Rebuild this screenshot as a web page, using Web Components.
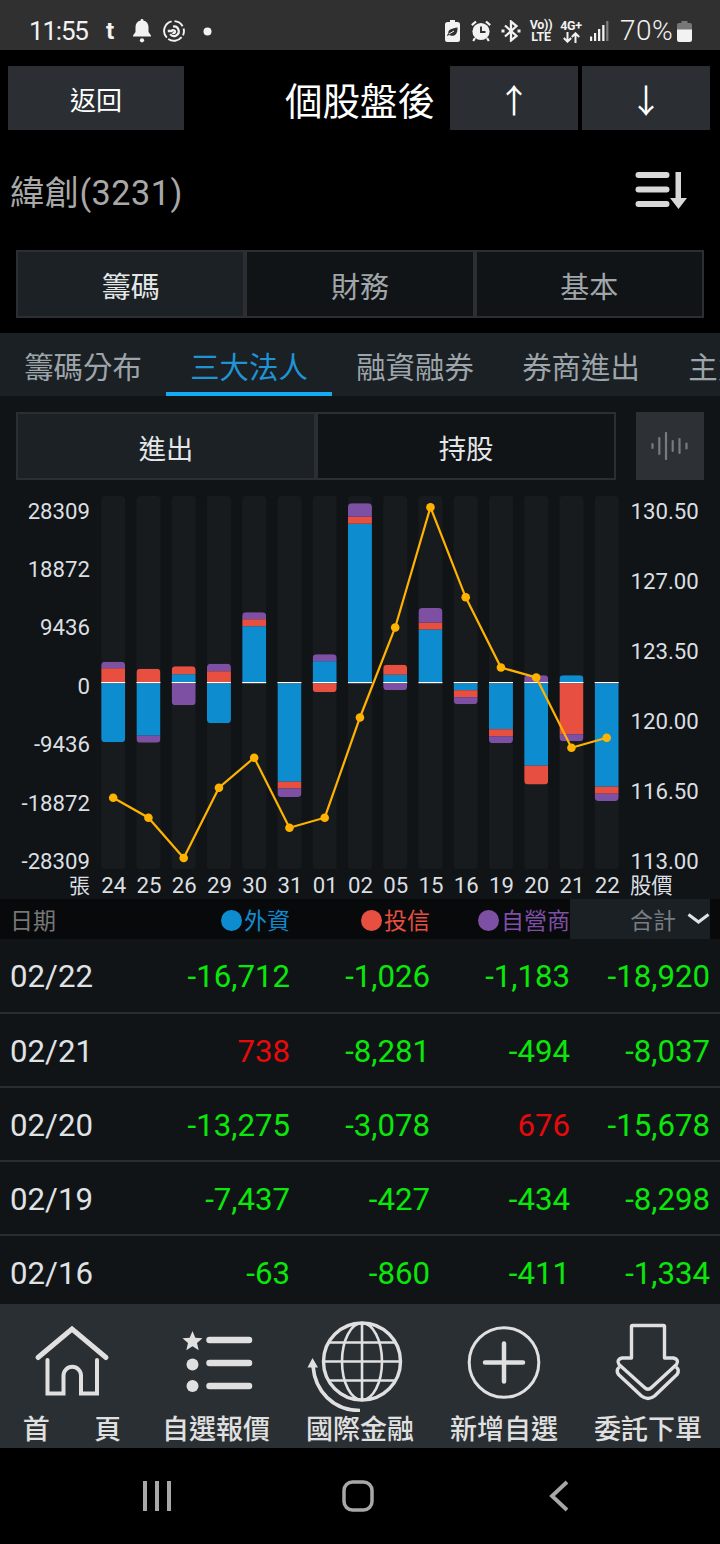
<!DOCTYPE html>
<html lang="zh-Hant">
<head>
<meta charset="utf-8">
<meta name="viewport" content="width=device-width, initial-scale=1">
<title>個股盤後</title>
<style>
    html, body{
        margin:0;
        background:#000;
    }
    body{
        width:720px;
        height:1544px;
        overflow:hidden;
        font-family:Roboto,"Noto Sans CJK TC",sans-serif;
        color:#fff;
        display:flex;
        flex-direction:column;
    }
    main{
        height:908px;
        overflow:hidden;
        background:#101417;
        flex:none;
    }
    .herramientas{
        display:flex;
        gap:20px;
        padding:16px 16px 16px;
    }
    .herramientas seg-group{ flex:1 }
</style>
</head>
<body>

<status-bar></status-bar>
<app-header titulo="個股盤後">
    <tool-button slot="izq" style="width:176px">返回</tool-button>
    <tool-button slot="der" style="width:128px;--size:33px;--baja:8px">↑</tool-button>
    <tool-button slot="der" style="width:128px;--size:33px;--baja:8px">↓</tool-button>
</app-header>
<stock-title>緯創(3231)</stock-title>
<seg-group style="margin:0 16px;--apagado:#a0a6a9;--size:29px">
    <seg-item activo>籌碼</seg-item>
    <seg-item>財務</seg-item>
    <seg-item>基本</seg-item>
</seg-group>
<tab-bar>
    <tab-item>籌碼分布</tab-item>
    <tab-item activo>三大法人</tab-item>
    <tab-item>融資融券</tab-item>
    <tab-item>券商進出</tab-item>
    <tab-item>主力進出</tab-item>
</tab-bar>
<main>
    <div class="herramientas">
        <seg-group style="--apagado:#e4e7e8;--size:27.300px">
            <seg-item activo>進出</seg-item>
            <seg-item>持股</seg-item>
        </seg-group>
        <wave-button></wave-button>
    </div>
    <inst-chart></inst-chart>
    <inst-table></inst-table>
</main>
<bottom-nav>
    <nav-item icono="casa" ancho>首 頁</nav-item>
    <nav-item icono="lista">自選報價</nav-item>
    <nav-item icono="globo">國際金融</nav-item>
    <nav-item icono="mas">新增自選</nav-item>
    <nav-item icono="orden">委託下單</nav-item>
</bottom-nav>
<system-nav></system-nav>

<script>
// Base: cada elemento solo define su html()
class Base extends HTMLElement{
    constructor(){
        super()
        this.attachShadow({mode:'open'})
    }
    connectedCallback(){
        this.shadowRoot.innerHTML = this.html()
    }
}

class StatusBar extends Base{
    html(){
        return `
        <style>
            :host{
                display:flex;
                align-items:center;
                justify-content:space-between;
                flex:none;
                height:50px;
                padding:12px 28px 0 29px;
                box-sizing:border-box;
                background:#303030;
                color:#f2f2f2;
                font-size:26px;
                line-height:38px;
            }
            div{ display:flex; align-items:center; height:38px }
            svg{ display:block; flex:none }
            .hora{ width:60px; letter-spacing:-1.2px; white-space:nowrap }
            .t{ width:10px; margin:0 19px 0 17px; font:bold 23px/34px Inter,sans-serif }
            .red{
                display:flex;
                flex-direction:column;
                align-items:center;
                font:bold 12.5px/12px Roboto,sans-serif;
                letter-spacing:-.3px;
                white-space:nowrap;
            }
            .pct{ letter-spacing:.5px; font-size:28px; width:54px; margin-left:11px; font-weight:300; white-space:nowrap }
        </style>
        <div>
            <span class="hora">11:55</span>
            <span class="t">t</span>
            <svg style="margin-left:-2px" width="18" height="24" viewBox="0 0 18 24" fill="currentColor"><path d="M9 0c1 0 1.400.6 1.400 1.400C13.600 2.100 15.500 4.700 15.500 8v5L18 16.500v1H0v-1L2.500 13V8c0-3.300 1.900-5.900 5.100-6.600C7.600.6 8 0 9 0z"/><circle cx="9" cy="21.300" r="2.100"/></svg>
            <svg style="margin-left:12px" width="22" height="22" viewBox="0 0 23 23" fill="none" stroke="currentColor" stroke-width="2"><path d="M9 1.400A10.300 10.300 0 0 0 4 18.500M5.500 19.800A10.300 10.300 0 0 0 19.500 18M21 16A10.300 10.300 0 0 0 21.500 9M20.500 6.500A10.300 10.300 0 0 0 12 1.200"/><path stroke-width="2.400" d="M5 11.500h4c1-1.500 4-.8 3.500 1.200-.3 1-1.500 1.300-2.500.5M10.500 6.800a5 5 0 1 1-3 8"/></svg>
            <svg style="margin-left:18px" width="9" height="9"><circle cx="4.500" cy="4.500" r="4" fill="currentColor"/></svg>
        </div>
        <div>
            <svg width="15" height="22" viewBox="0 0 15 22"><path fill="currentColor" d="M5 0h5v2h2.500A2.500 2.500 0 0 1 15 4.500v15a2.500 2.500 0 0 1-2.500 2.500h-10A2.500 2.500 0 0 1 0 19.500v-15A2.500 2.500 0 0 1 2.500 2H5z"/><path fill="#303030" d="M12.500 7.500c.3 5-1.500 8.500-5.500 8.300-1.200 0-2-.4-2.800-1L2.500 16l-.6-1 1.500-1.300C2.500 9 7.500 8.500 12.500 7.500z"/><path d="M4 14l5-3" stroke="currentColor"/></svg>
            <svg style="margin-left:11px" width="20" height="22" viewBox="0 0 20 22"><circle cx="10" cy="11.500" r="8.600" fill="currentColor"/><path d="M10 6.500v5.500h4.500" fill="none" stroke="#303030" stroke-width="1.900"/><path d="M.8 5.200L5 1.500M19.200 5.200L15 1.500M4 18l-1.800 3M16 18l1.800 3" stroke="currentColor" stroke-width="2.200" fill="none"/></svg>
            <svg style="margin-left:10px" width="20" height="22" viewBox="0 0 20 22" fill="none" stroke="currentColor" stroke-width="2.300"><path d="M4 5.500L15.500 16 10 20.500v-19L15.500 6 4 16.500"/><path d="M.5 11h3M16.500 11h3" stroke-width="3"/></svg>
            <span class="red" style="margin-left:9px;width:22px"><span>Vo))</span><span>LTE</span></span>
            <span class="red" style="margin-left:8px;width:22px"><span>4G+</span>
                <svg width="17" height="11" viewBox="0 0 17 11" fill="none" stroke="currentColor" stroke-width="2"><path d="M4.500 0v9.500M.8 6l3.700 3.700L8.200 6M12.500 11V1.500M8.800 5l3.700-3.700L16.200 5"/></svg>
            </span>
            <svg style="margin-left:8px" width="19" height="20" viewBox="0 0 19 20" fill="currentColor"><path d="M0 15.500h2.200V20H0zM4 12h2.200v8H4zM8 8h2.300v12H8zM12.200 4h2.300v16h-2.300z"/><path d="M16.200 0h2.200v20h-2.200z" opacity=".4"/></svg>
            <span class="pct">70%</span>
            <svg style="margin-left:3px" width="15" height="21" viewBox="0 0 15 21"><path fill="#777" d="M4.500 0h6v2H13a2 2 0 0 1 2 2v6H0V4a2 2 0 0 1 2-2h2.500z"/><path fill="currentColor" d="M0 8.500h15v10a2.500 2.500 0 0 1-2.500 2.500h-10A2.500 2.500 0 0 1 0 18.500z"/></svg>
        </div>`
    }
}
customElements.define("status-bar",StatusBar)


class ToolButton extends Base{
    html(){
        return `
        <style>
            :host{
                display:flex;
                align-items:center;
                justify-content:center;
                height:64px;
                padding-top:var(--baja,5px);
                box-sizing:border-box;
                background:#2b2f33;
                color:#fff;
                font-size:var(--size,26px);
                line-height:56px;
            }
        </style>
        <slot></slot>`
    }
}
customElements.define("tool-button",ToolButton)


class AppHeader extends Base{
    html(){
        return `
        <style>
            :host{
                display:flex;
                flex:none;
                height:96px;
                padding:16px 10px 16px 8px;
                box-sizing:border-box;
            }
            h1{
                flex:1;
                margin:0;
                padding:6px 15px 0 0;
                text-align:right;
                font-size:37.5px;
                font-weight:400;
                line-height:60px;
            }
            div{ display:flex; gap:4px }
        </style>
        <slot name="izq"></slot>
        <h1>${this.getAttribute("titulo")}</h1>
        <div><slot name="der"></slot></div>`
    }
}
customElements.define("app-header",AppHeader)


class StockTitle extends Base{
    html(){
        return `
        <style>
            :host{
                display:flex;
                flex:none;
                justify-content:space-between;
                align-items:center;
                height:104px;
                padding:0 33px 10px 10px;
                box-sizing:border-box;
                font-size:34.200px;
                letter-spacing:.5px;
                line-height:50px;
                color:#a8a8a8;
            }
            svg{ margin-top:-6px }
        </style>
        <slot></slot>
        <svg width="52" height="38" viewBox="0 0 52 38"><path d="M3.500 4h28M3.500 18.500h28M3.500 33h28" stroke="#d8d8d8" stroke-width="6" stroke-linecap="round"/><path d="M40.500 1h5.500v26h6L43.500 38 35 27h5.500z" fill="#d8d8d8"/></svg>`
    }
}
customElements.define("stock-title",StockTitle)


class SegGroup extends Base{
    html(){
        return `
        <style>
            :host{ display:flex; height:68px; flex:none }
        </style>
        <slot></slot>`
    }
}
customElements.define("seg-group",SegGroup)


class SegItem extends Base{
    html(){
        return `
        <style>
            :host{
                flex:1;
                display:block;
                box-sizing:border-box;
                border:2px solid #2b2e32;
                background:#101417;
                color:var(--apagado);
                padding-top:4px;
                text-align:center;
                font-size:var(--size);
                line-height:64px;
                height:68px;
            }
            :host([activo]){ background:#1b2124; color:#e4e7e8 }
        </style>
        <slot></slot>`
    }
}
customElements.define("seg-item",SegItem)


class TabBar extends Base{
    html(){
        return `
        <style>
            :host{
                display:flex;
                flex:none;
                height:63px;
                margin-top:15px;
                overflow:hidden;
                background:#1a2024;
            }
        </style>
        <slot></slot>`
    }
}
customElements.define("tab-bar",TabBar)


class TabItem extends Base{
    html(){
        return `
        <style>
            :host{
                flex:none;
                display:block;
                width:166px;
                height:63px;
                box-sizing:border-box;
                border-bottom:4px solid transparent;
                text-align:center;
                white-space:nowrap;
                font-size:29.4px;
                line-height:70px;
                color:#9da4aa;
            }
            :host([activo]){ color:#1f93d4; border-color:#13abf5 }
        </style>
        <slot></slot>`
    }
}
customElements.define("tab-item",TabItem)


class WaveButton extends Base{
    html(){
        return `
        <style>
            :host{
                display:flex;
                align-items:center;
                justify-content:center;
                width:68px;
                height:68px;
                background:#2d3135;
            }
        </style>
        <svg width="38" height="28" viewBox="0 0 38 28" stroke="#777b7e" stroke-width="2.200" stroke-linecap="round"><path d="M1.500 12v4M8.300 6v16M15 1v26M21.700 9v10M28.500 7v14M35.500 11.500v5"/></svg>`
    }
}
customElements.define("wave-button",WaveButton)


// v = azul, r = rojo, m = morado. Alturas en px desde la línea del cero
const dias = [
    {d:"24", up:[["r",14],["m",6.5]],             down:[["v",59]],                     p:797.7},
    {d:"25", up:[["r",13.5]],                     down:[["v",52.5],["m",7]],           p:817.7},
    {d:"26", up:[["v",8],["r",8]],                down:[["m",22]],                     p:858},
    {d:"29", up:[["r",11],["m",7.5]],             down:[["v",40]],                     p:787.7},
    {d:"30", up:[["v",56],["r",7],["m",7]],       down:[],                             p:757.7},
    {d:"31", up:[],                               down:[["v",98.5],["r",6.8],["m",8.5]], p:827.7},
    {d:"01", up:[["v",21],["m",7]],               down:[["r",9]],                      p:817.7},
    {d:"02", up:[["v",158.5],["r",7],["m",13.5]], down:[],                             p:717.5},
    {d:"05", up:[["v",7.5],["r",10]],             down:[["m",7]],                      p:627.5},
    {d:"15", up:[["v",52.7],["r",7],["m",14.5]],  down:[],                             p:507.2},
    {d:"16", up:[],                               down:[["v",7],["r",7],["m",7]],      p:597.3},
    {d:"19", up:[],                               down:[["v",46],["r",7],["m",7]],     p:667.5},
    {d:"20", up:[["m",7]],                        down:[["v",82.5],["r",18.8]],        p:677.5},
    {d:"21", up:[["v",7]],                        down:[["r",51],["m",7]],             p:747.7},
    {d:"22", up:[],                               down:[["v",103.5],["r",7],["m",7.3]], p:737.7}
]
const tono = {v:"#0d8dd0", r:"#e74f41", m:"#7d50a4"}

class InstChart extends Base{
    html(){
        // los positivos arrancan en cero y los negativos en base
        const cero = 186.2, base = 187.2, ancho = 24
        const cx = i => 113.2+i*35.25
        let pistas = "", barras = "", fechas = "", clips = ""

        dias.forEach((dia,i)=>{
            let x = cx(i)-ancho/2
            pistas += `<rect x="${x}" y="0" width="${ancho}" height="373" rx="3.500"/>`
            let alto = dia.up.reduce((a,b)=>a+b[1],0)
            let bajo = dia.down.reduce((a,b)=>a+b[1],0)
            // el recorte redondea solo el extremo de cada pila
            let a = alto ? `M${x} ${cero}V${cero-alto+4}q0-4 4-4h16q4 0 4 4V${cero}z` : ""
            let b = bajo ? `M${x} ${base}V${base+bajo-4}q0 4 4 4h16q4 0 4-4V${base}z` : ""
            clips += `<clipPath id="c${i}"><path d="${a}${b}"/></clipPath>`
            let y = cero, rects = ""
            dia.up.forEach(([c,h])=>{
                y -= h
                rects += `<rect x="${x}" y="${y}" width="${ancho}" height="${h}" fill="${tono[c]}"/>`
            })
            y = base
            dia.down.forEach(([c,h])=>{
                rects += `<rect x="${x}" y="${y}" width="${ancho}" height="${h}" fill="${tono[c]}"/>`
                y += h
            })
            barras += `<g clip-path="url(#c${i})">${rects}</g><rect x="${x}" y="186" width="${ancho}" height="1.200" fill="#fff"/>`
            fechas += `<text x="${cx(i)+.5}" y="397" text-anchor="middle">${dia.d}</text>`
        })

        let izq = ["28309","18872","9436","0","-9436","-18872","-28309"]
            .map((t,i)=>`<text x="90" y="${22.5+i*58.4}" text-anchor="end">${t}</text>`).join("")
        let der = ["130.50","127.00","123.50","120.00","116.50","113.00"]
            .map((t,i)=>`<text x="630.500" y="${22.5+i*70.1}">${t}</text>`).join("")
        let puntos = dias.map((dia,i)=>[cx(i),dia.p-496])

        return `
        <style>
            :host{ display:block; height:403px }
            svg{ display:block }
            text{ font-size:22.2px; fill:#dcdfe1 }
        </style>
        <svg width="720" height="403" viewBox="0 0 720 403">
            <defs>${clips}</defs>
            <g fill="#171b1d">${pistas}</g>
            ${barras}
            <polyline points="${puntos.join(" ")}" fill="none" stroke="#ffb300" stroke-width="2.200"/>
            <g fill="#ffb300">${puntos.map(p=>`<circle cx="${p[0]}" cy="${p[1]}" r="4.300"/>`).join("")}</g>
            ${izq}${der}${fechas}
            <text x="90" y="397" text-anchor="end" style="font-size:21px">張</text>
            <text x="630" y="397" style="font-size:21.300px">股價</text>
        </svg>`
    }
}
customElements.define("inst-chart",InstChart)


const filas = [
    ["02/22","-16,712","-1,026","-1,183","-18,920"],
    ["02/21","738","-8,281","-494","-8,037"],
    ["02/20","-13,275","-3,078","676","-15,678"],
    ["02/19","-7,437","-427","-434","-8,298"],
    ["02/16","-63","-860","-411","-1,334"]
]

class InstTable extends Base{
    html(){
        let cuerpo = filas.map(f=>`
            <div class="fila">${f.map((t,i)=>{
                let clase = i==0 ? "" : t[0]=="-" ? "baja" : "sube"
                return `<span class="${clase}">${t}</span>`
            }).join("")}</div>`).join("")
        return `
        <style>
            :host{ display:block }
            .cab, .fila{
                display:grid;
                grid-template-columns:140px 140px 140px 140px 140px;
                padding:0 10px;
                text-align:right;
                white-space:nowrap;
            }
            .cab{
                height:40px;
                background:#08090b;
                font-size:23px;
                line-height:46px;
            }
            .cab span{ display:flex; justify-content:flex-end; height:40px }
            .cab i{
                width:21px;
                height:21px;
                margin:11px 2px 0 0;
                border-radius:50%;
                background:currentColor;
            }
            .cab .fecha{ justify-content:flex-start; color:#777 }
            .cab .total{ background:#1a2024; color:#777d81 }
            .cab svg{ margin:13px 0 0 11px }
            .fila{
                height:74px;
                box-sizing:border-box;
                border-bottom:2px solid #2a2d30;
                font-size:31.200px;
                line-height:76px;
                color:#e0e3e5;
            }
            .fila:nth-of-type(2){ height:75px }
            .fila span:first-child{ text-align:left }
            .baja{ color:#0be70b }
            .sube{ color:#e60a0a }
        </style>
        <div class="cab">
            <span class="fecha">日期</span>
            <span style="color:#0d8dd0"><i></i>外資</span>
            <span style="color:#e74f41"><i></i>投信</span>
            <span style="color:#7d50a4"><i></i>自營商</span>
            <span class="total">合計<svg width="23" height="14" viewBox="0 0 23 14"><path d="M1.500 2.500l10 7.500 10-7.500" fill="none" stroke="#e0e3e5" stroke-width="3"/></svg></span>
        </div>
        ${cuerpo}`
    }
}
customElements.define("inst-table",InstTable)


// Iconos del menú inferior, todos en un lienzo de 144x108
const iconos = {
    casa:`<g fill="none" stroke="#e0e0e0" stroke-linecap="round"><path d="M38 53.500L72 25l34 28.500" stroke-width="5"/><path d="M47.500 56v33.500h16V71.500a8.700 8.700 0 0 1 17.500 0V89.500h16V56" stroke-width="4"/></g>`,
    lista:`<g fill="#e0e0e0"><path d="M48.500 27l2.800 6.700 7.200.6-5.500 4.700 1.700 7.200-6.200-3.900-6.200 3.900 1.700-7.200-5.500-4.700 7.200-.6z"/><circle cx="48.500" cy="60.500" r="6"/><circle cx="48.500" cy="82" r="6"/></g><path d="M65.500 36H105M65.500 59H105M65.500 82H105" stroke="#e0e0e0" stroke-width="6.500" stroke-linecap="round"/>`,
    globo:`<g fill="none" stroke="#e0e0e0" stroke-width="2.600"><circle cx="74" cy="57.500" r="38.500" stroke-width="3.400"/><path d="M74 19v77M36 57.500h76M41.500 38.500h65M41.500 76.500h65"/><ellipse cx="74" cy="57.500" rx="20" ry="38.500"/><path d="M25 62c2 25 20 44.500 47 44.500" stroke-width="3.600"/></g><path d="M24.500 54l5.500 9.500h-10.500z" fill="#e0e0e0"/>`,
    mas:`<g fill="none" stroke="#e0e0e0"><circle cx="72" cy="58.500" r="34.800" stroke-width="3"/><path d="M53 58.500h38M72 39.500v38" stroke-width="4.500" stroke-linecap="round"/></g>`,
    orden:`<g fill="none" stroke="#e0e0e0" stroke-width="3.400" stroke-linejoin="round"><path d="M55.500 54V22.500q0-1 1-1h31q1 0 1 1V54h9q6 1.500 3 6.500L75.500 83.500q-3.500 3.500-7 0L43 60.500q-3-5 3-6.500z" /><path d="M43.500 63q-4 3-1 7.500L65.500 92q6.500 5 13 0l22.500-21.500q3-4.500-1-7.500"/></g>`
}

class BottomNav extends Base{
    html(){
        return `
        <style>
            :host{ display:flex; flex:none; height:144px; background:#2a2f33 }
        </style>
        <slot></slot>`
    }
}
customElements.define("bottom-nav",BottomNav)


class NavItem extends Base{
    html(){
        return `
        <style>
            :host{
                flex:1;
                display:flex;
                flex-direction:column;
                align-items:center;
                font-size:27px;
                font-weight:500;
                line-height:32px;
                color:#e0e0e0;
                white-space:nowrap;
            }
            :host([ancho]){ word-spacing:38px }
            svg{ display:block; flex:none; margin-bottom:2px }
        </style>
        <svg width="144" height="108" viewBox="0 0 144 108">${iconos[this.getAttribute("icono")]}</svg>
        <slot></slot>`
    }
}
customElements.define("nav-item",NavItem)


class SystemNav extends Base{
    html(){
        return `
        <style>
            :host{
                display:flex;
                flex:none;
                align-items:center;
                justify-content:space-between;
                height:96px;
                padding:0 151px 0 142px;
                box-sizing:border-box;
                background:#000;
            }
            .inicio{ margin-right:6px }
        </style>
        <svg width="30" height="32" fill="none" stroke="#a8a8a8" stroke-width="4"><path d="M3 1v30M15 1v30M27 1v30"/></svg>
        <svg class="inicio" width="32" height="32" fill="none" stroke="#a8a8a8" stroke-width="3.500"><rect x="2" y="2" width="28" height="28" rx="8.500"/></svg>
        <svg width="20" height="32" fill="none" stroke="#a8a8a8" stroke-width="3.800"><path d="M18 2L3 16l15 14"/></svg>`
    }
}
customElements.define("system-nav",SystemNav)
</script>
</body>
</html>
